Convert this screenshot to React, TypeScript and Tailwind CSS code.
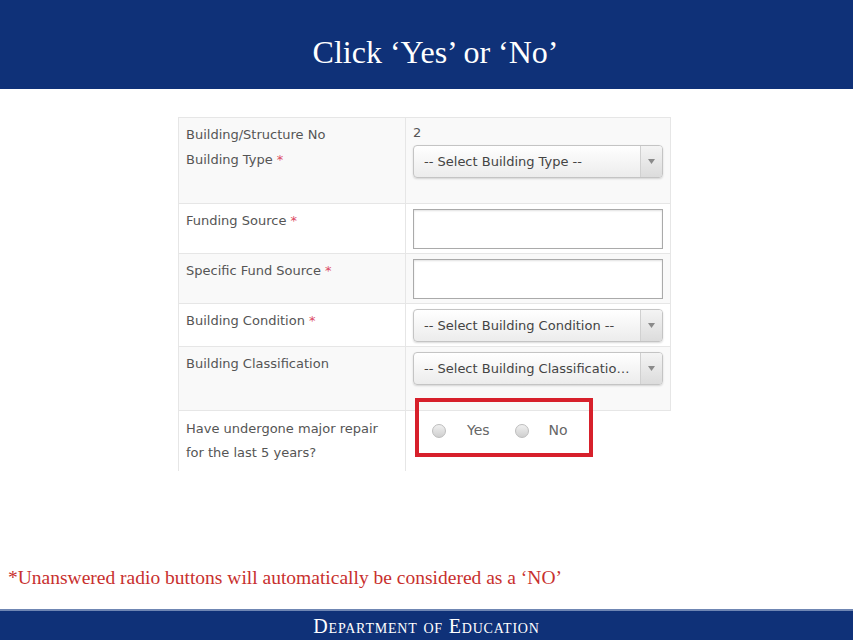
import React from "react";

const label = "text-[13px] leading-[25px] text-[#555]";

function Req() {
  return <span className="ml-1 text-[#dc4a64]">*</span>;
}

function Select({ text }: { text: string }) {
  return (
    <div className="flex h-[33px] w-[250px] items-stretch overflow-hidden rounded-[4px] border border-[#c4c4c4] bg-gradient-to-b from-white to-[#ececec] shadow-[0_1px_2px_rgba(0,0,0,0.15)]">
      <div className="min-w-0 flex-1 truncate pl-[10px] pr-[4px] text-[13px] leading-[31px] text-[#444]">{text}</div>
      <div className="flex w-[22px] shrink-0 items-center justify-center border-l border-[#d0d0d0] bg-gradient-to-b from-[#f4f4f4] to-[#dcdcdc]">
        <svg width="7" height="5" viewBox="0 0 7 5">
          <path d="M0 0h7L3.5 5z" fill="#8a8a8a" />
        </svg>
      </div>
    </div>
  );
}

function TextBox() {
  return <div className="h-[40px] w-[250px] border border-[#aaa] bg-white shadow-[inset_0_1px_2px_rgba(0,0,0,0.12)]" />;
}

function Radio() {
  return <span className="inline-block h-[14px] w-[14px] rounded-full border border-[#bdbdbd] bg-gradient-to-b from-[#f0f0f0] to-[#cfcfcf]" />;
}

function Row({
  shaded,
  height,
  left,
  right,
}: {
  shaded?: boolean;
  height: number;
  left: React.ReactNode;
  right: React.ReactNode;
}) {
  return (
    <div className={`flex border-b border-[#e6e6e6] ${shaded ? "bg-[#f9f9f9]" : "bg-white"}`} style={{ height }}>
      <div className="w-[227px] shrink-0 border-r border-[#e6e6e6] pl-[7px] pt-[4px]">{left}</div>
      <div className="relative flex-1 border-r border-[#e6e6e6] pl-[7px] pt-[5px]">{right}</div>
    </div>
  );
}

export default function App() {
  return (
    <div className="flex h-[640px] w-[853px] flex-col bg-white" style={{ fontFamily: '"DejaVu Sans", Verdana, sans-serif' }}>
      <header className="flex h-[89px] shrink-0 items-center justify-center bg-[#0f3178] pl-[18px] pt-[14px]">
        <h1 className="text-[32px] text-white" style={{ fontFamily: '"Liberation Serif", Georgia, serif' }}>
          Click ‘Yes’ or ‘No’
        </h1>
      </header>

      <main className="flex-1">
        <div className="ml-[178px] mt-[28px] w-[493px] border-t border-l border-[#e6e6e6]">
          <Row
            shaded
            height={86}
            left={
              <div className={label}>
                <div>Building/Structure No</div>
                <div>
                  Building Type<Req />
                </div>
              </div>
            }
            right={
              <div className="-mt-[2px]">
                <div className="text-[13px] leading-[24px] text-[#555]">2</div>
                <Select text="-- Select Building Type --" />
              </div>
            }
          />
          <Row
            height={50}
            left={
              <div className={label}>
                Funding Source<Req />
              </div>
            }
            right={<TextBox />}
          />
          <Row
            shaded
            height={50}
            left={
              <div className={label}>
                Specific Fund Source<Req />
              </div>
            }
            right={<TextBox />}
          />
          <Row
            height={43}
            left={
              <div className={label}>
                Building Condition<Req />
              </div>
            }
            right={<Select text="-- Select Building Condition --" />}
          />
          <Row
            shaded
            height={64}
            left={<div className={label}>Building Classification</div>}
            right={<Select text="-- Select Building Classification --" />}
          />
          <div className="flex h-[60px]">
            <div className="w-[227px] shrink-0 border-r border-[#e6e6e6] pl-[7px] pt-[6px]">
              <div className="text-[13px] leading-[24px] text-[#555]">
                Have undergone major repair
                <br />
                for the last 5 years?
              </div>
            </div>
            <div className="relative flex-1">
              <div className="flex items-center pl-[26px] pt-[9px] text-[14px] text-[#666]">
                <Radio />
                <span className="ml-[21px]">Yes</span>
                <span className="ml-[25px] flex">
                  <Radio />
                </span>
                <span className="ml-[20px]">No</span>
              </div>
              <div className="absolute left-[9px] top-[-13px] h-[59px] w-[178px] border-[4px] border-[#d7202b]" />
            </div>
          </div>
        </div>
      </main>

      <p
        className="mb-[17px] pl-[8px] text-[19.5px] text-[#c8302e]"
        style={{ fontFamily: '"Liberation Serif", Georgia, serif' }}
      >
        *Unanswered radio buttons will automatically be considered as a ‘NO’
      </p>

      <footer className="flex h-[31px] shrink-0 items-center justify-center border-t-2 border-[#6f86b3] bg-[#0f3178]">
        <span
          className="text-[20px] tracking-[0.8px] text-white"
          style={{ fontFamily: '"Liberation Serif", Georgia, serif', fontVariant: "small-caps" }}
        >
          Department of Education
        </span>
      </footer>
    </div>
  );
}
